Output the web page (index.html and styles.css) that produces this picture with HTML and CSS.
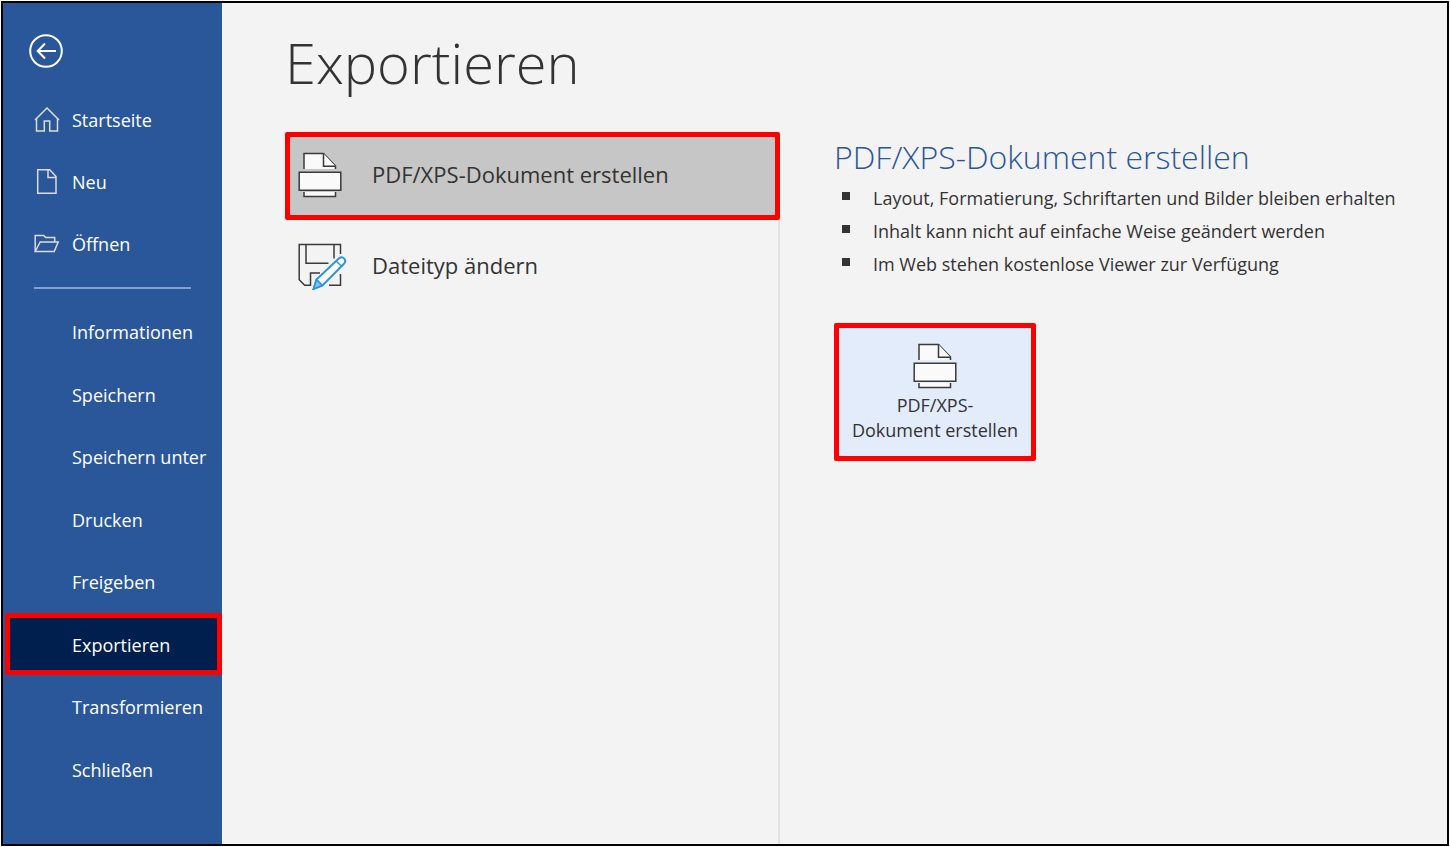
FILE: index.html
```html
<!DOCTYPE html>
<html lang="de">
<head>
    <meta charset="UTF-8">
    <meta name="viewport" content="width=device-width, initial-scale=1.0">
    <title>Exportieren</title>
    <link rel="stylesheet" href="styles.css">
</head>
<body>

    <div class="window">
        <nav class="sidebar">
            <button class="back" aria-label="Zurück">
                <svg width="34" height="34" viewBox="0 0 34 34" fill="none" stroke="#fff" stroke-width="2">
                    <circle cx="17" cy="17" r="15.8"/>
                    <path d="M27 17H9M16 9.500L8.700 17l7.300 7.500"/>
                </svg>
            </button>

            <ul class="menu menu-top">
                <li><a href="#">
                    <svg width="26" height="26" viewBox="0 0 26 26" fill="none" stroke="#dcdcdc" stroke-width="1.500">
                        <path d="M1 13L13 1l12 12M2.500 11.500v12.500h7.800V14h5.400v10h7.800V11.500"/>
                    </svg>
                    Startseite
                </a></li>
                <li><a href="#">
                    <svg width="26" height="26" viewBox="0 0 26 26" fill="none" stroke="#dcdcdc" stroke-width="1.500">
                        <path d="M3.700 .8h12l6.300 6.700v16.700H3.700zM14 1v7.500H22"/>
                    </svg>
                    Neu
                </a></li>
                <li><a href="#">
                    <svg width="26" height="26" viewBox="0 0 26 26" fill="none" stroke="#dcdcdc" stroke-width="1.500">
                        <path d="M1.200 20.500V4.500h8.500l2 2h9v4.500M1.200 20.500l5-9.500h18l-4 9.500z"/>
                    </svg>
                    Öffnen
                </a></li>
            </ul>

            <hr class="divider">

            <ul class="menu menu-main">
                <li><a href="#">Informationen</a></li>
                <li><a href="#">Speichern</a></li>
                <li><a href="#">Speichern unter</a></li>
                <li><a href="#">Drucken</a></li>
                <li><a href="#">Freigeben</a></li>
                <li><a href="#" class="active" aria-current="page">Exportieren</a></li>
                <li><a href="#">Transformieren</a></li>
                <li><a href="#">Schließen</a></li>
            </ul>
        </nav>

        <main class="content">
            <h1>Exportieren</h1>

            <div class="columns">
                <div class="options">
                    <button class="option selected">
                        <svg width="50" height="50" viewBox="0 0 50 50" fill="#fafafa" stroke="#3b3a39" stroke-width="1.500">
                            <path d="M7 20V4.500h19.500L38.500 17v3"/>
                            <path d="M26.500 4.500v12.700h12"/>
                            <path d="M2.200 23.200h41.600v18H2.200z"/>
                            <path d="M7 43v4.500h31.500V43"/>
                        </svg>
                        PDF/XPS-Dokument erstellen
                    </button>
                    <button class="option">
                        <svg width="50" height="50" viewBox="0 0 50 50" fill="none" stroke="#3b3a39" stroke-width="1.500">
                            <path d="M43.500 14V4.500H2.200v35.300l5.500 5.500H13.500V33h9.500M9 4.500v18.700h22.500M37 4.500v14M32 45.300h11.500V34"/>
                            <path d="M16.500 49l3-9.500L42 18.200c4-2.800 8.200 2 5 5.500L25.500 45.500z" fill="#fafafa" stroke="#2b95d6" stroke-width="2"/>
                            <path d="M16.500 49l3-9.500 6 6z" fill="#83beec" stroke="#2b95d6"/>
                            <path d="M39 21l6 5.500" stroke="#2b95d6"/>
                        </svg>
                        Dateityp ändern
                    </button>
                </div>

                <section class="details">
                    <h2>PDF/XPS-Dokument erstellen</h2>
                    <ul class="notes">
                        <li>Layout, Formatierung, Schriftarten und Bilder bleiben erhalten</li>
                        <li>Inhalt kann nicht auf einfache Weise geändert werden</li>
                        <li>Im Web stehen kostenlose Viewer zur Verfügung</li>
                    </ul>
                    <button class="create">
                        <svg width="46" height="50" viewBox="0 0 46 50" fill="#fafafa" stroke="#3b3a39" stroke-width="1.500">
                            <path d="M7 19V3.500h19.500L38.500 16v3"/>
                            <path d="M26.500 3.500v12.700h12"/>
                            <path d="M2.200 22.200h41.600v18H2.200z"/>
                            <path d="M7 42v4.500h31.500V42"/>
                        </svg>
                        <span>PDF/XPS-<br>Dokument erstellen</span>
                    </button>
                </section>
            </div>
        </main>
    </div>

</body>
</html>
```
FILE: styles.css
```css
* {
    box-sizing: border-box;
}

body {
    margin: 0;
    padding: 1px;
    background: #fff;
    font-family: "Open Sans", "Noto Sans", sans-serif;
    color: #333;
}

button {
    font-family: inherit;
    color: inherit;
    cursor: pointer;
}

ul {
    list-style: none;
    margin: 0;
    padding: 0;
}

.window {
    display: flex;
    min-height: calc(100vh - 2px);
    border: 2px solid #000;
    background: #f3f3f3;
}

/* Sidebar */
.sidebar {
    display: flex;
    flex-direction: column;
    flex: 0 0 219px;
    padding-bottom: 44px;
    background: #2a579a;
}

.back {
    align-self: flex-start;
    margin: 31px 0 21px 26px;
    padding: 0;
    border: none;
    background: none;
}

.back svg {
    display: block;
}

.menu {
    display: flex;
    flex-direction: column;
}

.menu li {
    display: flex;
    flex: 1;
    min-height: 62px;
}

.menu a {
    display: flex;
    flex: 1;
    align-items: center;
    gap: 12px;
    padding-left: 31px;
    color: #fff;
    font-size: 18px;
    line-height: 24px;
    text-decoration: none;
    white-space: nowrap;
}

.menu-main {
    flex: 1;
}

.menu-main a {
    padding: 2px 0 0 69px;
}

.menu-main .active {
    margin-left: 2px;
    padding-left: 62px;
    border: 5px solid #f00;
    border-radius: 2px;
    background: #001f4e;
}

.divider {
    width: 157px;
    margin: 12px 0 11px 31px;
    border: none;
    border-top: 2px solid #7fa3cc;
}

/* Content */
.content {
    display: flex;
    flex-direction: column;
    flex: 1;
    padding-left: 63px;
}

h1 {
    margin: 19px 0 30px;
    font-size: 56px;
    font-weight: 300;
    line-height: 80px;
}

.columns {
    display: flex;
    flex: 1;
}

.options {
    flex: 0 0 495px;
    background: linear-gradient(#e3e3e3, #e3e3e3) right top / 2px 100% no-repeat;
}

.option {
    display: flex;
    align-items: center;
    gap: 25px;
    width: 100%;
    height: 88px;
    margin-bottom: 3px;
    padding: 0 12px 4px;
    border: none;
    background: none;
    font-size: 22px;
}

.option.selected {
    padding: 0 7px 4px;
    border: 5px solid #f00;
    border-radius: 2px;
    background: #c6c6c6;
}

.details {
    padding: 5px 20px 0 54px;
}

h2 {
    margin: 0;
    color: #2a579a;
    font-size: 32px;
    font-weight: 300;
    line-height: 40px;
}

.notes {
    margin: 5px 0 42px;
    font-size: 18px;
    line-height: 33px;
}

.notes li {
    display: flex;
    align-items: center;
    gap: 23px;
}

.notes li::before {
    content: "";
    width: 8px;
    height: 8px;
    margin: 0 0 6px 8px;
    background: #333;
}

.create {
    display: flex;
    flex-direction: column;
    align-items: center;
    gap: 2px;
    width: 202px;
    padding: 13px 0;
    border: 5px solid #f00;
    border-radius: 2px;
    background: #e3ecfb;
    font-size: 18px;
    line-height: 25px;
}
```
